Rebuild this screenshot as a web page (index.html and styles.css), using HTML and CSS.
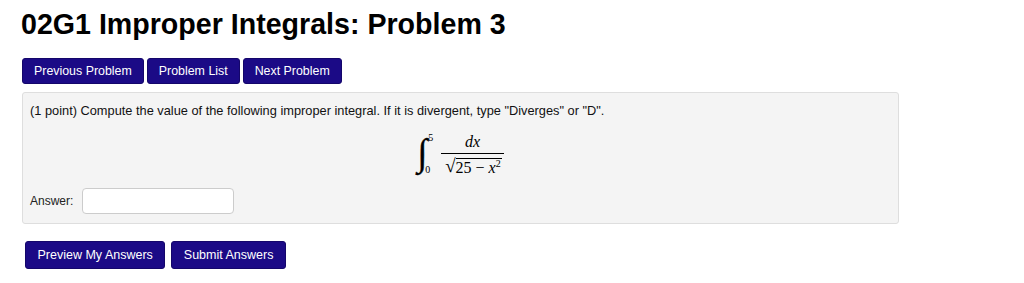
FILE: index.html
```html
<!DOCTYPE html>
<html>
<head>
<meta charset="utf-8">
<link rel="stylesheet" href="styles.css">
</head>
<body>
<div class="page">
  <h1 class="title">02G1 Improper Integrals: Problem 3</h1>
  <div class="nav">
    <button class="btn">Previous Problem</button>
    <button class="btn">Problem List</button>
    <button class="btn">Next Problem</button>
  </div>
  <div class="panel">
    <p class="prompt">(1 point) Compute the value of the following improper integral. If it is divergent, type "Diverges" or "D".</p>
    <div class="math">
      <span class="intwrap">
        <span class="int">∫</span>
        <span class="limits"><span class="up">5</span><span class="low">0</span></span>
      </span>
      <span class="frac">
        <span class="num">dx</span>
        <span class="den"><span class="rad">√</span><span class="radicand">25 − <i>x</i><sup>2</sup></span></span>
      </span>
    </div>
    <div class="answer">
      <label class="alabel">Answer:</label>
      <input class="ainput" type="text">
    </div>
  </div>
  <div class="actions">
    <button class="btn btn-lg">Preview My Answers</button>
    <button class="btn btn-lg">Submit Answers</button>
  </div>
</div>
</body>
</html>
```

FILE: styles.css
```css
html, body {
  margin: 0;
  padding: 0;
  background: #fff;
}
body {
  font-family: "Liberation Sans", Arial, sans-serif;
  color: #222;
}
.page {
  padding: 0 0 0 22px;
  width: 877px;
}
.title {
  margin: 0 0 0 -1px;
  padding-top: 8px;
  font-size: 28.6px;
  line-height: 32px;
  font-weight: bold;
  color: #000;
}
.nav {
  display: flex;
  gap: 3px;
  margin-top: 18px;
}
.btn {
  font-family: "Liberation Sans", Arial, sans-serif;
  font-size: 12.4px;
  color: #fff;
  background: #1b0a86;
  border: 1px solid #14066a;
  border-radius: 3px;
  height: 26px;
  padding: 0 11px;
  line-height: 24px;
}
.panel {
  margin-top: 8px;
  background: #f4f4f4;
  border: 1px solid #dedede;
  border-radius: 3px;
  box-sizing: border-box;
  height: 132px;
  padding: 0 7px;
}
.prompt {
  margin: 10px 0 0 0;
  font-size: 12.8px;
  line-height: 15px;
  color: #111;
}
.math {
  display: flex;
  justify-content: center;
  align-items: center;
  font-family: "Liberation Serif", "Times New Roman", serif;
  color: #000;
  margin-top: 14px;
  height: 44px;
}
.intwrap {
  display: flex;
  align-items: stretch;
  height: 44px;
}
.int {
  font-size: 36px;
  font-style: italic;
  line-height: 44px;
  transform: scaleY(1.05);
  display: inline-block;
  margin-top: -2px;
  -webkit-text-stroke: 0.4px #000;
}
.limits {
  display: flex;
  flex-direction: column;
  justify-content: space-between;
  font-size: 10px;
  line-height: 11px;
  margin-left: 1px;
}
.up { margin-top: 0; }
.low { margin-left: -3px; margin-bottom: 1px; }
.frac {
  display: flex;
  flex-direction: column;
  align-items: center;
  margin-left: 8px;
}
.num {
  font-style: italic;
  font-size: 16px;
  line-height: 18px;
  border-bottom: 1px solid #000;
  width: 100%;
  text-align: center;
  padding-bottom: 2px;
}
.den {
  font-size: 16px;
  line-height: 20px;
  display: flex;
  align-items: flex-end;
  padding: 2px 2px 0 4px;
}
.rad {
  font-size: 19px;
  line-height: 20px;
}
.radicand {
  border-top: 1px solid #000;
  line-height: 17px;
  padding-right: 1px;
}
.radicand sup {
  font-size: 10px;
  line-height: 0;
  font-style: normal;
}
.answer {
  display: flex;
  align-items: center;
  margin-top: 12px;
}
.alabel {
  font-size: 12px;
  color: #222;
}
.ainput {
  margin-left: 9px;
  width: 152px;
  height: 26px;
  box-sizing: border-box;
  border: 1px solid #ccc;
  border-radius: 4px;
  background: #fff;
}
.actions {
  display: flex;
  gap: 6px;
  margin-top: 17px;
  padding-left: 3px;
}
.btn-lg {
  height: 28px;
  padding: 0 11.5px;
  font-size: 12.5px;
  border-radius: 3px;
}
```
